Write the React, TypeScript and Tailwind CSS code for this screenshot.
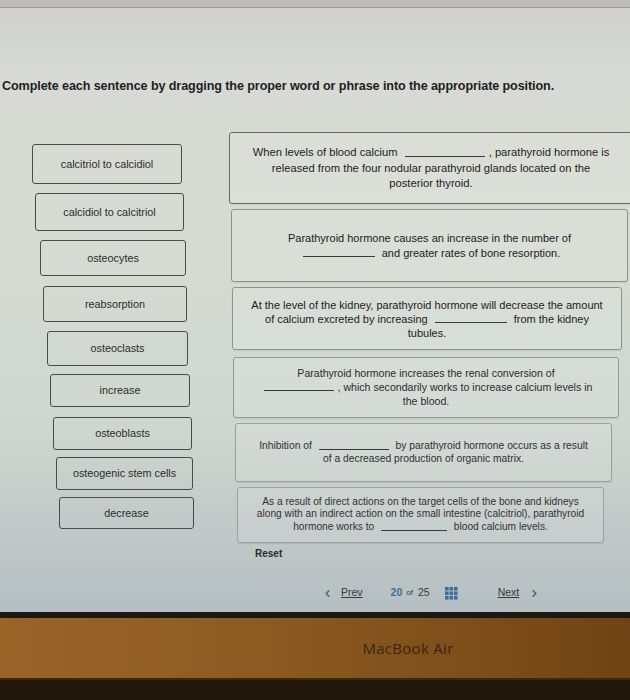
import React from "react";
import { ChevronLeft, ChevronRight } from "lucide-react";

const font = { fontFamily: '"Liberation Sans", Arial, sans-serif' };

// word bank, photo is skewed so each box sits a bit further right
const choices = [
  { label: "calcitriol to calcidiol", cls: "mt-[12px] ml-[32px] w-[150px] h-[40px]" },
  { label: "calcidiol to calcitriol", cls: "mt-[9px] ml-[35px] w-[149px] h-[38px]" },
  { label: "osteocytes", cls: "mt-[9px] ml-[40px] w-[146px] h-[36px]" },
  { label: "reabsorption", cls: "mt-[10px] ml-[43px] w-[144px] h-[36px]" },
  { label: "osteoclasts", cls: "mt-[9px] ml-[47px] w-[141px] h-[35px]" },
  { label: "increase", cls: "mt-[8px] ml-[50px] w-[140px] h-[33px]" },
  { label: "osteoblasts", cls: "mt-[10px] ml-[53px] w-[139px] h-[33px]" },
  { label: "osteogenic stem cells", cls: "mt-[7px] ml-[56px] w-[137px] h-[33px]" },
  { label: "decrease", cls: "mt-[7px] ml-[59px] w-[135px] h-[32px]" },
];

const Blank = ({ w = "w-[80px]" }: { w?: string }) => (
  <span className={`inline-block ${w} mx-[4px] border-b border-[#3a3a3a] h-[1em] align-baseline`} />
);

const Drop = ({ cls, children }: { cls: string; children: React.ReactNode }) => (
  <div
    className={`flex items-center justify-center text-center rounded-[3px] border bg-white/10 shadow-[0_1px_1px_rgba(0,0,0,0.08)] ${cls}`}
  >
    <p>{children}</p>
  </div>
);

const GridIcon = () => (
  <svg width="13" height="13" viewBox="0 0 13 13">
    {[0, 4.5, 9].map((y) =>
      [0, 4.5, 9].map((x) => (
        <rect key={`${x}-${y}`} x={x} y={y} width="3.6" height="3.6" fill="#3c6f9b" />
      ))
    )}
  </svg>
);

export default function App() {
  return (
    <div className="w-[630px] h-[700px] overflow-hidden flex flex-col" style={font}>
      {/* laptop screen */}
      <div className="h-[612px] flex flex-col bg-[linear-gradient(180deg,#cfcfcb_0%,#d7dad4_12%,#d5dbd3_45%,#cfd6d0_70%,#b5bec1_100%)]">
        <div className="h-[8px] bg-[#bdbcb8] border-b border-[#9c9c98]" />

        <p className="mt-[70px] ml-[2px] text-[12.6px] leading-[16px] font-bold text-[#1e1e1e] tracking-[-0.1px]">
          Complete each sentence by dragging the proper word or phrase into the appropriate position.
        </p>

        <div className="mt-[38px] flex">
          {/* word bank */}
          <div className="w-[229px] flex flex-col shrink-0">
            {choices.map((c) => (
              <div
                key={c.label}
                className={`flex items-center justify-center rounded-[3px] border border-[#4a4a4a] text-[10.8px] text-[#2c2c2c] ${c.cls}`}
              >
                {c.label}
              </div>
            ))}
          </div>

          {/* sentences */}
          <div className="flex flex-col shrink-0 text-[#222]">
            <Drop cls="w-[404px] h-[72px] ml-0 border-[#6a6a66] text-[11.2px] leading-[15px]">
              When levels of blood calcium <Blank />, parathyroid hormone is
              <br />
              released from the four nodular parathyroid glands located on the
              <br />
              posterior thyroid.
            </Drop>
            <Drop cls="mt-[5px] w-[397px] h-[73px] ml-[2px] border-[#8e938e] text-[11px] leading-[15px]">
              Parathyroid hormone causes an increase in the number of
              <br />
              <Blank w="w-[72px]" /> and greater rates of bone resorption.
            </Drop>
            <Drop cls="mt-[5px] w-[390px] h-[63px] ml-[3px] border-[#8e938e] text-[11px] leading-[14px]">
              At the level of the kidney, parathyroid hormone will decrease the amount
              <br />
              of calcium excreted by increasing <Blank w="w-[72px]" /> from the kidney
              <br />
              tubules.
            </Drop>
            <Drop cls="mt-[7px] w-[386px] h-[61px] ml-[4px] border-[#959a95] text-[10.6px] leading-[13.5px] text-[#2c2c2c]">
              Parathyroid hormone increases the renal conversion of
              <br />
              <Blank w="w-[70px]" />, which secondarily works to increase calcium levels in
              <br />
              the blood.
            </Drop>
            <Drop cls="mt-[5px] w-[377px] h-[59px] ml-[6px] border-[#9a9f9a] text-[10.3px] leading-[12.5px] text-[#303030]">
              Inhibition of <Blank w="w-[70px]" /> by parathyroid hormone occurs as a result
              <br />
              of a decreased production of organic matrix.
            </Drop>
            <Drop cls="mt-[5px] w-[367px] h-[56px] ml-[8px] border-[#9ea39e] text-[10.2px] leading-[12px] text-[#333]">
              As a result of direct actions on the target cells of the bone and kidneys
              <br />
              along with an indirect action on the small intestine (calcitriol), parathyroid
              <br />
              hormone works to <Blank w="w-[66px]" /> blood calcium levels.
            </Drop>
          </div>
        </div>

        <p className="mt-[4px] ml-[255px] text-[10px] leading-[14px] font-bold text-[#2a2a2a]">Reset</p>

        {/* pagination */}
        <div className="mt-[24px] flex items-center h-[16px] text-[10.5px] text-[#3a3a3a]">
          <ChevronLeft className="ml-[322px] text-[#3c6f9b]" size={11} strokeWidth={3.5} />
          <span className="ml-[8px] underline">Prev</span>
          <span className="ml-[28px] font-bold text-[#3c6f9b]">20</span>
          <span className="ml-[4px] text-[8px]">of</span>
          <span className="ml-[5px]">25</span>
          <span className="ml-[15px]">
            <GridIcon />
          </span>
          <span className="ml-[40px] underline">Next</span>
          <ChevronRight className="ml-[10px] text-[#3c6f9b]" size={11} strokeWidth={3.5} />
        </div>
      </div>

      {/* bezel */}
      <div className="h-[6px] bg-[#1b1912]" />
      <div className="h-[60px] flex items-center justify-center bg-[linear-gradient(90deg,#9a6429_0%,#8d5b22_40%,#7d4e1a_75%,#6f4414_100%)]">
        <span className="ml-[186px] text-[15px] text-[#3b2410] tracking-[0.3px]" style={{ fontFamily: '"Open Sans", "Liberation Sans", sans-serif' }}>
          MacBook Air
        </span>
      </div>
      <div className="h-[2px] bg-[#3a2812]" />
      <div className="flex-1 bg-[#22170b]" />
    </div>
  );
}
